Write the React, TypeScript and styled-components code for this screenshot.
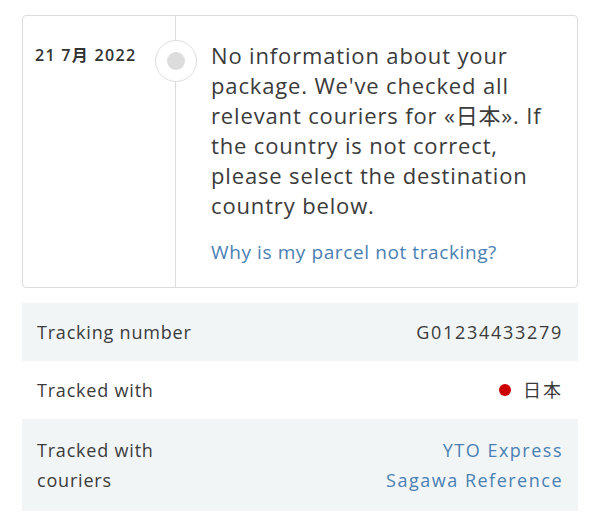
import React from 'react';
import styled, { createGlobalStyle } from 'styled-components';

const GlobalStyle = createGlobalStyle`
	html, body {
		margin: 0;
		padding: 0;
		background: #ffffff;
		font-family: 'Open Sans', 'Noto Sans CJK JP', sans-serif;
		color: #3b3b3b;
	}
`;

const Page = styled.div`
	width: 600px;
	padding: 15px 22px 16px;
	box-sizing: border-box;
`;

const Card = styled.div`
	display: flex;
	border: 1px solid #dcdcdc;
	border-radius: 4px;
	background: #fff;
`;

const DateCol = styled.div`
	width: 153px;
	flex: none;
	padding: 26px 0 0 12px;
	box-sizing: border-box;
	border-right: 1px solid #dcdcdc;
	position: relative;
	font-size: 16px;
	font-weight: 600;
	letter-spacing: 1.3px;
	color: #333;
`;

const Marker = styled.span`
	position: absolute;
	top: 24px;
	right: -22px;
	width: 42px;
	height: 42px;
	box-sizing: border-box;
	border: 1px solid #dedede;
	border-radius: 50%;
	background: #fff;
	display: flex;
	align-items: center;
	justify-content: center;

	&::after {
		content: '';
		width: 18px;
		height: 18px;
		border-radius: 50%;
		background: #dcdcdc;
	}
`;

const Body = styled.div`
	flex: 1;
	padding: 24px 20px 22px 35px;
`;

const Message = styled.p`
	margin: 0;
	font-size: 22px;
	line-height: 30px;
	letter-spacing: 0.85px;
	color: #3b3b3b;
`;

const Link = styled.a`
	display: block;
	margin-top: 19px;
	font-size: 19px;
	line-height: 26px;
	letter-spacing: 0.6px;
	color: #4a80b3;
	text-decoration: none;
`;

const Table = styled.div`
	margin-top: 15px;
`;

const Row = styled.div<{ $shaded?: boolean; $tall?: boolean }>`
	display: flex;
	justify-content: space-between;
	padding: ${p => (p.$tall ? '16px 15px' : '14px 15px')};
	background: ${p => (p.$shaded ? '#f1f5f6' : 'transparent')};
	font-size: 18px;
	line-height: 30px;
	letter-spacing: 0.8px;
`;

const Label = styled.div`
	color: #3b3b3b;
	width: 160px;
`;

const Value = styled.div<{ $link?: boolean; $spaced?: boolean }>`
	text-align: right;
	color: ${p => (p.$link ? '#4a80b3' : '#3b3b3b')};
	letter-spacing: ${p => (p.$spaced ? '1.7px' : p.$link ? '1.5px' : '0.8px')};
	display: flex;
	flex-direction: column;
	align-items: flex-end;
`;

const Country = styled.span`
	display: inline-flex;
	align-items: center;
	gap: 12px;
	letter-spacing: 2px;
`;

const Flag = styled.span`
	width: 12px;
	height: 12px;
	border-radius: 50%;
	background: #cc0000;
`;

export default function App() {
	return (
		<Page>
			<GlobalStyle />
			<Card>
				<DateCol>
					21 7月 2022
					<Marker />
				</DateCol>
				<Body>
					<Message>
						No information about your package. We've checked all relevant couriers for «日本». If the
						country is not correct, please select the destination country below.
					</Message>
					<Link href="#">Why is my parcel not tracking?</Link>
				</Body>
			</Card>
			<Table>
				<Row $shaded>
					<Label>Tracking number</Label>
					<Value $spaced>G01234433279</Value>
				</Row>
				<Row>
					<Label>Tracked with</Label>
					<Value>
						<Country>
							<Flag />
							日本
						</Country>
					</Value>
				</Row>
				<Row $shaded $tall>
					<Label>Tracked with couriers</Label>
					<Value $link>
						<span>YTO Express</span>
						<span>Sagawa Reference</span>
					</Value>
				</Row>
			</Table>
		</Page>
	);
}
